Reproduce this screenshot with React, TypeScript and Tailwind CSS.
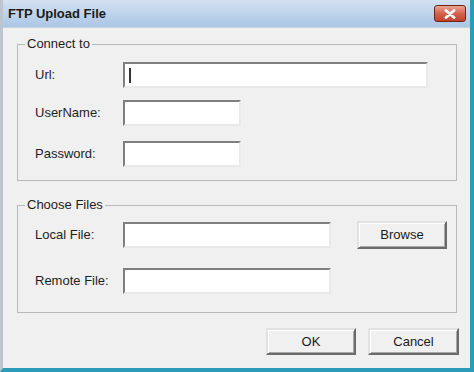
import React from 'react';

const inputCls =
  'h-[26px] bg-white border-2 border-t-[#7f7f7f] border-l-[#7f7f7f] border-b-[#e9e9e9] border-r-[#e9e9e9] flex items-center';

const btnCls =
  'h-[27px] bg-[#f0f0f0] border-2 border-t-[#e2e2e2] border-l-[#e2e2e2] border-b-[#6a6a6a] border-r-[#6a6a6a] shadow-[inset_1px_1px_0_#ffffff,inset_-1px_-1px_0_#a8a8a8] text-[13px] text-[#1a1a1a] flex items-center justify-center';

const Field: React.FC<{ label: string; width: string; cursor?: boolean; className?: string }> = ({
  label,
  width,
  cursor,
  className = '',
}) => (
  <div className={`flex items-center pl-[17px] ${className}`}>
    <span className="w-[88px] text-[13px] text-[#1e1e1e]">{label}</span>
    <div className={`${inputCls} ${width}`}>
      {cursor && <span className="ml-[4px] w-[2px] h-[15px] bg-[#333]" />}
    </div>
  </div>
);

export default function App() {
  return (
    <div className="w-[474px] h-[372px] flex flex-col overflow-hidden border-l-[3px] border-l-[#bcc6d0] border-r-4 border-r-[#2a9bb8] border-b-4 border-b-[#2a9bb8] font-['Liberation_Sans',Arial,sans-serif]">
      <div className="h-[28px] shrink-0 flex items-center justify-between pl-[5px] pr-[4px] bg-gradient-to-b from-[#d3e1f1] to-[#abc6e6] border-b border-[#c9d3dd]">
        <span className="text-[13px] font-bold text-[#1b1b1b]">FTP Upload File</span>
        <div className="w-[32px] h-[17px] rounded-[3px] border border-[#6e2417] bg-gradient-to-b from-[#eaa595] via-[#d4624c] to-[#c2432c] flex items-center justify-center">
          <svg width="12" height="10" viewBox="0 0 12 10">
            <path d="M2 1.5 L10 8.5 M10 1.5 L2 8.5" stroke="#ffffff" strokeWidth="2.8" strokeLinecap="round" />
          </svg>
        </div>
      </div>

      <div className="flex-1 bg-[#f0f0f0] flex flex-col">
        <fieldset className="mt-[8px] ml-[14px] mr-[13px] border border-[#b9b9b9] pt-[10px] pb-[13px]">
          <legend className="ml-[7px] px-[2px] text-[13px] leading-4 text-[#1e1e1e]">Connect to</legend>
          <Field label="Url:" width="w-[305px]" cursor />
          <Field label="UserName:" width="w-[118px]" className="mt-[12px]" />
          <Field label="Password:" width="w-[118px]" className="mt-[15px]" />
        </fieldset>

        <fieldset className="mt-[16px] ml-[14px] mr-[13px] border border-[#b9b9b9] pt-[8px] pb-[18px]">
          <legend className="ml-[7px] px-[2px] text-[13px] leading-4 text-[#1e1e1e]">Choose Files</legend>
          <div className="flex items-center">
            <Field label="Local File:" width="w-[208px]" />
            <button className={`${btnCls} ml-[26px] w-[90px] h-[28px]`}>Browse</button>
          </div>
          <Field label="Remote File:" width="w-[208px]" className="mt-[19px]" />
        </fieldset>

        <div className="mt-[15px] flex justify-end gap-[12px] pr-[11px]">
          <button className={`${btnCls} w-[90px]`}>OK</button>
          <button className={`${btnCls} w-[91px]`}>Cancel</button>
        </div>
      </div>
    </div>
  );
}
